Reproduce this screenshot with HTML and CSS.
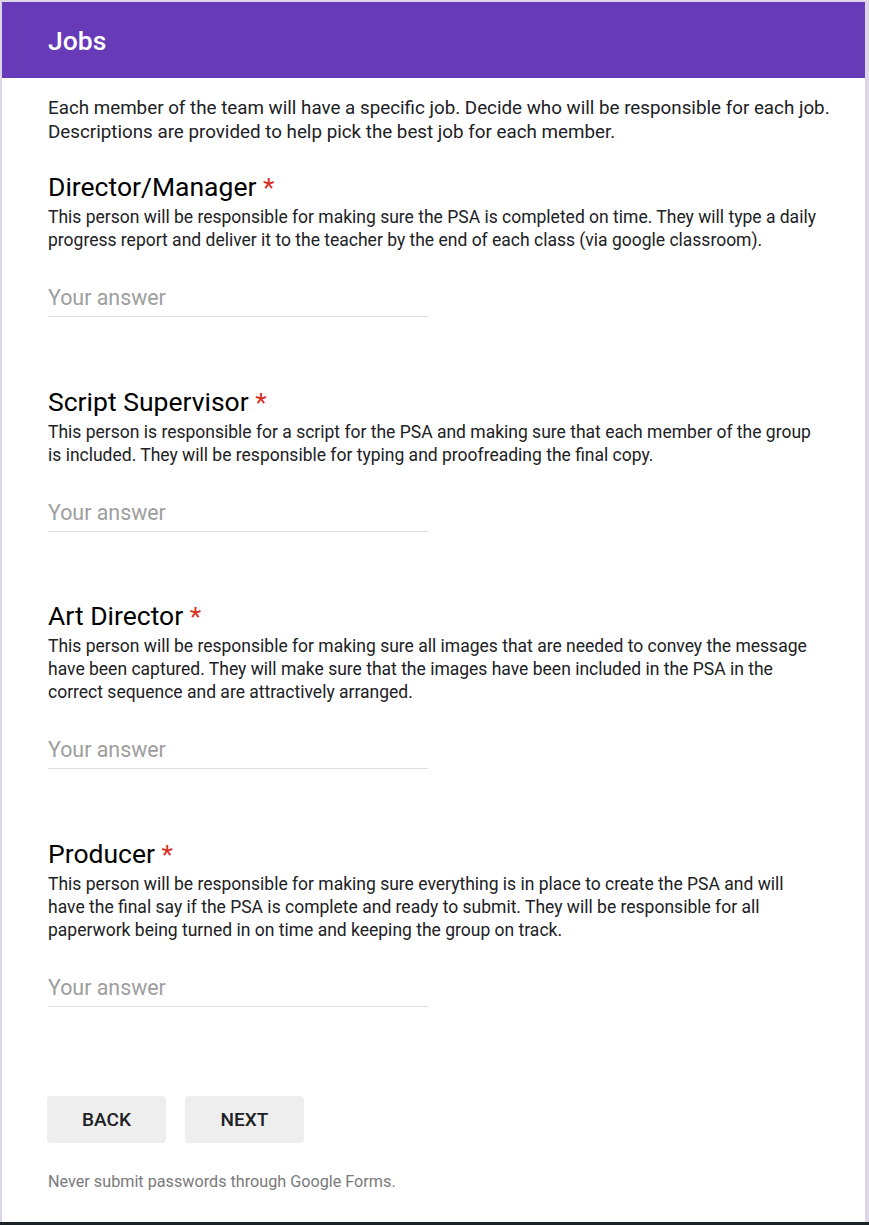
FILE: index.html
```html
<!DOCTYPE html>
<html lang="en">
<head>
<meta charset="utf-8">
<title>Jobs</title>
<link rel="stylesheet" href="styles.css">
</head>
<body>
<div class="page">
  <div class="card">
    <div class="header"><h1 class="header-title">Jobs</h1></div>
    <div class="content">
      <p class="intro">Each member of the team will have a specific job. Decide who will be responsible for each job. Descriptions are provided to help pick the best job for each member.</p>

      <div class="question">
        <div class="q-title">Director/Manager <span class="req">*</span></div>
        <div class="q-desc">This person will be responsible for making sure the PSA is completed on time. They will type a daily progress report and deliver it to the teacher by the end of each class (via google classroom).</div>
        <div class="answer">Your answer</div>
      </div>

      <div class="question">
        <div class="q-title">Script Supervisor <span class="req">*</span></div>
        <div class="q-desc">This person is responsible for a script for the PSA and making sure that each member of the group is included. They will be responsible for typing and proofreading the final copy.</div>
        <div class="answer">Your answer</div>
      </div>

      <div class="question">
        <div class="q-title">Art Director <span class="req">*</span></div>
        <div class="q-desc">This person will be responsible for making sure all images that are needed to convey the message have been captured. They will make sure that the images have been included in the PSA in the correct sequence and are attractively arranged.</div>
        <div class="answer">Your answer</div>
      </div>

      <div class="question">
        <div class="q-title">Producer <span class="req">*</span></div>
        <div class="q-desc">This person will be responsible for making sure everything is in place to create the PSA and will have the final say if the PSA is complete and ready to submit. They will be responsible for all paperwork being turned in on time and keeping the group on track.</div>
        <div class="answer">Your answer</div>
      </div>

      <div class="buttons">
        <div class="btn">BACK</div>
        <div class="btn">NEXT</div>
      </div>

      <p class="footer-note">Never submit passwords through Google Forms.</p>
    </div>
  </div>
  <div class="taskbar"></div>
</div>
</body>
</html>
```

FILE: styles.css
```css
html, body {
  margin: 0;
  padding: 0;
}

body {
  background: #ddd6ea;
  font-family: Roboto, "Noto Sans", Arial, sans-serif;
  color: #202124;
}

.page {
  padding: 2px 4px 0 2px;
  height: 1225px;
  box-sizing: border-box;
  display: flex;
  flex-direction: column;
}

.card {
  background: #ffffff;
  height: 1220px;
  display: flex;
  flex-direction: column;
}

.header {
  background: #673ab7;
  height: 76px;
  display: flex;
  align-items: center;
  padding-left: 46px;
}

.header-title {
  margin: 0;
  color: #ffffff;
  font-size: 26.5px;
  font-weight: 500;
  line-height: 30px;
  padding-top: 2px;
}

.content {
  padding: 18px 0 0 46px;
}

.intro {
  margin: 0;
  font-size: 18.8px;
  line-height: 24px;
  max-width: 800px;
  color: #202124;
}

.question {
  margin-top: 28px;
}

.question + .question {
  margin-top: 69.5px;
}

.q-title {
  font-size: 26.5px;
  line-height: 30px;
  color: #000000;
}

.req {
  color: #d93025;
}

.q-desc {
  margin-top: 4px;
  font-size: 17.5px;
  line-height: 23px;
  max-width: 774px;
  color: #202124;
}

.answer {
  margin-top: 32px;
  width: 380px;
  font-size: 21.4px;
  line-height: 28px;
  color: #9e9e9e;
  padding-bottom: 4px;
  border-bottom: 1px solid #e0e0e0;
}

.buttons {
  margin: 89px 0 0 -1px;
  display: flex;
  gap: 19px;
}

.btn {
  width: 119px;
  height: 47px;
  background: #eeeeee;
  border-radius: 4px;
  display: flex;
  align-items: center;
  justify-content: center;
  font-size: 19px;
  font-weight: 500;
  color: #202124;
}

.footer-note {
  margin: 29px 0 0;
  font-size: 16.2px;
  line-height: 20px;
  color: #7a7a7a;
}

.taskbar {
  height: 3px;
  background: #1b2327;
  margin: 0 -4px 0 -2px;
}
```
